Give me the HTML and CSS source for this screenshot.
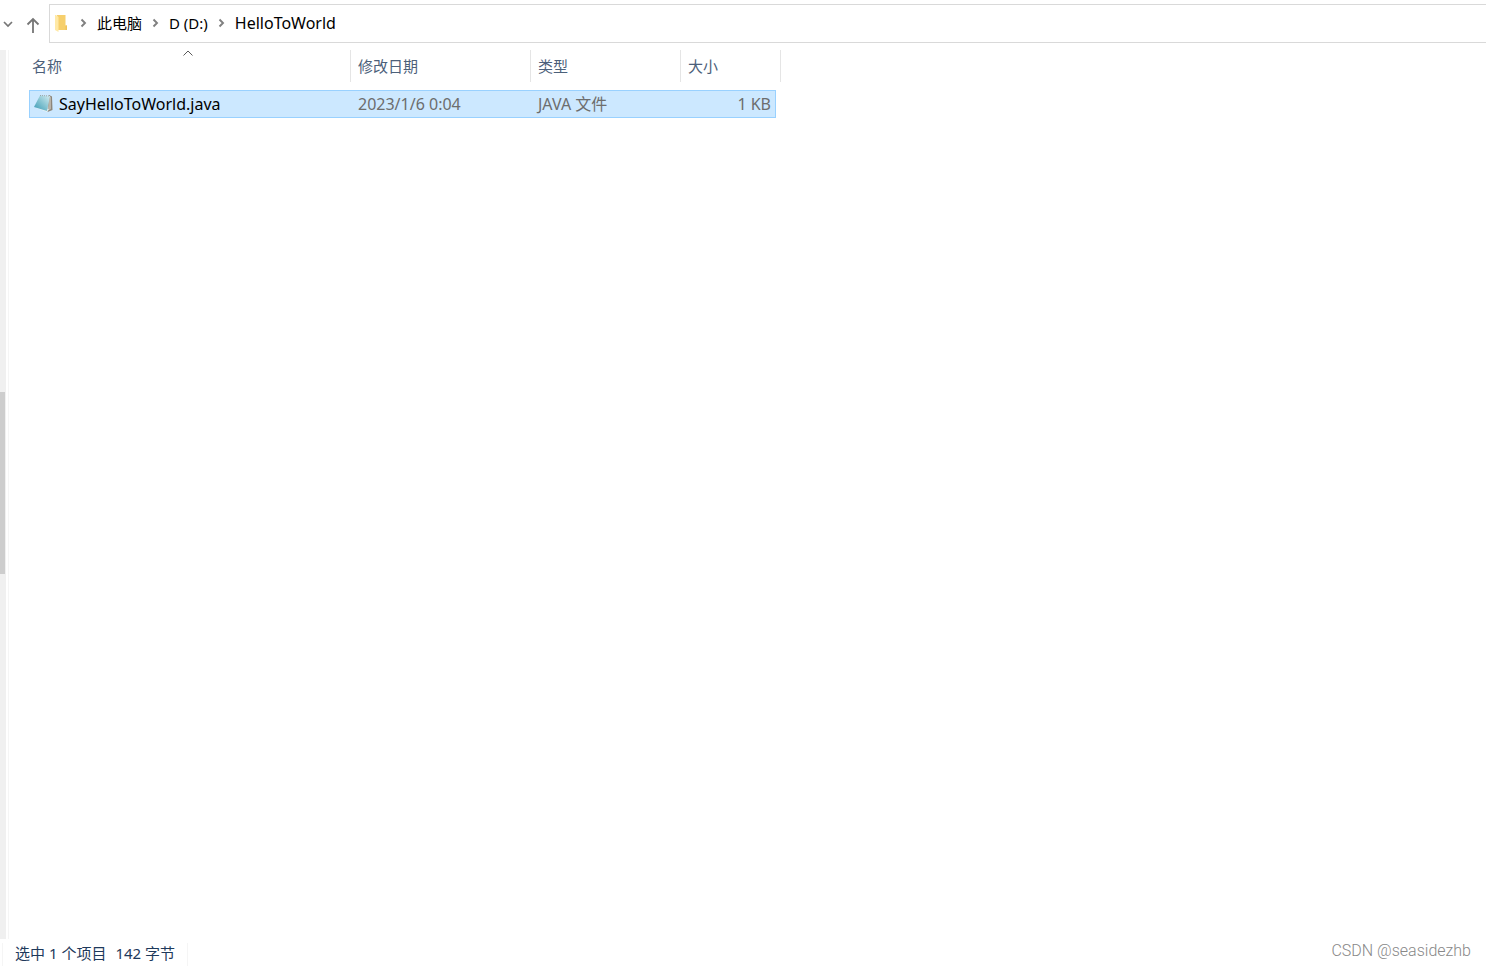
FILE: index.html
```html
<!DOCTYPE html>
<html lang="zh-CN">
<head>
    <meta charset="UTF-8">
    <title>HelloToWorld</title>
    <link rel="stylesheet" href="styles.css">
</head>
<body>
    <div class="window">
        <div class="toolbar">
            <button class="recent" aria-label="最近浏览的位置">
                <svg width="10" height="8" viewBox="0 0 10 8"><path d="M1 2l4 4 4-4" fill="none" stroke="#767676" stroke-width="1.7"/></svg>
            </button>
            <button class="up" aria-label="上移">
                <svg width="14" height="16" viewBox="0 0 14 16"><path d="M7 16V2M1.500 7.500L7 2l5.500 5.500" fill="none" stroke="#767676" stroke-width="1.800"/></svg>
            </button>
            <nav class="address">
                <svg class="folder" width="13" height="18" viewBox="0 0 13 18">
                    <path d="M2 1h8.500v10.500h1.500V16H3z" fill="#f6cf6c"/>
                    <path d="M10.500 11.500H12V16h-1.500z" fill="#f0c35c"/>
                    <path d="M0 1h1l2.500 2v15L0 16z" fill="#ffe9a6"/>
                </svg>
                <svg class="arrow" width="7" height="10" viewBox="0 0 7 10"><path d="M1.500 1.500L5 5 1.500 8.500" fill="none" stroke="#808080" stroke-width="1.900"/></svg>
                <a href="#">此电脑</a>
                <svg class="arrow" width="7" height="10" viewBox="0 0 7 10"><path d="M1.500 1.500L5 5 1.500 8.500" fill="none" stroke="#808080" stroke-width="1.900"/></svg>
                <a href="#">D (D:)</a>
                <svg class="arrow" width="7" height="10" viewBox="0 0 7 10"><path d="M1.500 1.500L5 5 1.500 8.500" fill="none" stroke="#808080" stroke-width="1.900"/></svg>
                <a class="current" href="#">HelloToWorld</a>
            </nav>
        </div>
        <div class="content">
            <div class="scrollbar"><div class="thumb"></div></div>
            <main class="files">
                <table>
                    <thead>
                        <tr>
                            <th class="sorted">名称
                                <svg class="sort" width="10" height="6" viewBox="0 0 10 6"><path d="M.5 5.500L5 1l4.500 4.500" fill="none" stroke="#5a5a5a"/></svg>
                            </th>
                            <th>修改日期</th>
                            <th>类型</th>
                            <th>大小</th>
                        </tr>
                    </thead>
                    <tbody>
                        <tr>
                            <td class="name">
                                <svg width="20" height="20" viewBox="0 0 20 20">
                                    <defs>
                                        <linearGradient id="page" x1="0" y1="1" x2="1" y2="0">
                                            <stop offset="0" stop-color="#3a9ab5"/>
                                            <stop offset=".5" stop-color="#84c3d1"/>
                                            <stop offset="1" stop-color="#d5edf2"/>
                                        </linearGradient>
                                    </defs>
                                    <path d="M15 1l3 1.500.5 13.500-5 2z" fill="#8c8579"/>
                                    <path d="M15.500 2l1.500 1v12l-3.500 2z" fill="#b9b3a8"/>
                                    <path d="M1 13.500l12 4.500 2-3z" fill="#e9f3f5"/>
                                    <path d="M6 1.500l10 .5-3 15L0 13z" fill="url(#page)"/>
                                    <path d="M6 1.500l10 .5" stroke="#9aa4a6" stroke-dasharray="1 1"/>
                                </svg>
                                SayHelloToWorld.java
                            </td>
                            <td>2023/1/6 0:04</td>
                            <td>JAVA 文件</td>
                            <td class="size">1 KB</td>
                        </tr>
                    </tbody>
                </table>
            </main>
        </div>
        <footer class="status">
            <div class="info"><span>选中 1 个项目</span><span>142 字节</span></div>
            <div class="watermark">CSDN @seasidezhb</div>
        </footer>
    </div>
</body>
</html>
```

FILE: styles.css
```css
body {
    margin: 0;
    background-color: #fff;
    font-family: "Noto Sans", "Noto Sans CJK SC", sans-serif;
    font-size: 15px;
    line-height: 20px;
    color: #000;
}
svg {
    display: block;
    flex-shrink: 0;
}
button {
    border: 0;
    padding: 0;
    background: none;
}
.window {
    display: flex;
    flex-direction: column;
    height: 100vh;
    overflow: hidden;
}
.toolbar {
    display: flex;
    align-items: center;
    height: 39px;
    padding-top: 4px;
    margin-bottom: 7px;
}
.recent {
    margin-left: 3px;
}
.up {
    margin: 2px 9px 0 13px;
}
.address {
    display: flex;
    align-items: center;
    box-sizing: border-box;
    flex: 1;
    height: 39px;
    padding: 0 0 2px 5px;
    border: 1px solid #d9d9d9;
    border-right: 0;
}
.address a {
    color: #000;
    text-decoration: none;
}
.address .current {
    font-size: 16px;
}
.arrow {
    margin: 0 10px;
}
.folder + .arrow {
    margin-left: 12px;
}
.content {
    display: flex;
    flex: 1;
}
.scrollbar {
    display: flex;
    align-items: center;
    width: 6px;
    background-color: #f0f0f0;
}
.thumb {
    width: 5px;
    height: 182px;
    margin-bottom: 24px;
    background-color: #cdcdcd;
}
.files {
    flex: 1;
    margin-left: 2px;
    padding-left: 20px;
    border-left: 1px solid #f5f5f5;
}
table, thead, tbody {
    display: block;
}
table {
    width: 752px;
}
tr {
    display: grid;
    grid-template-columns: 322px 180px 150px 1fr;
}
th {
    padding: 6px 7px;
    border-right: 1px solid #e5e5e5;
    font-weight: normal;
    text-align: left;
    color: #4c607a;
}
.sorted {
    position: relative;
    padding-left: 3px;
}
.sort {
    position: absolute;
    top: 0;
    left: calc(50% - 7px);
}
tbody tr {
    margin: 8px 5px 0 0;
    border: 1px solid #99d1ff;
    background-color: #cce8ff;
    font-size: 16px;
    color: #6d6d6d;
}
td {
    padding: 3px 6px;
}
.name {
    display: flex;
    align-items: center;
    gap: 5px;
    padding-left: 4px;
    color: #000;
}
.size {
    padding-right: 4px;
    text-align: right;
}
.status {
    display: flex;
    justify-content: space-between;
    height: 27px;
    color: #1e395b;
}
.info {
    display: flex;
    gap: 9px;
    margin: 4px 0 0 2px;
    padding: 0 12px;
    border: solid #f5f5f5;
    border-width: 0 1px;
}
.watermark {
    margin: 2px 15px 0 0;
    font-family: Roboto, sans-serif;
    font-size: 16px;
    font-weight: 300;
    color: #888;
}
```
